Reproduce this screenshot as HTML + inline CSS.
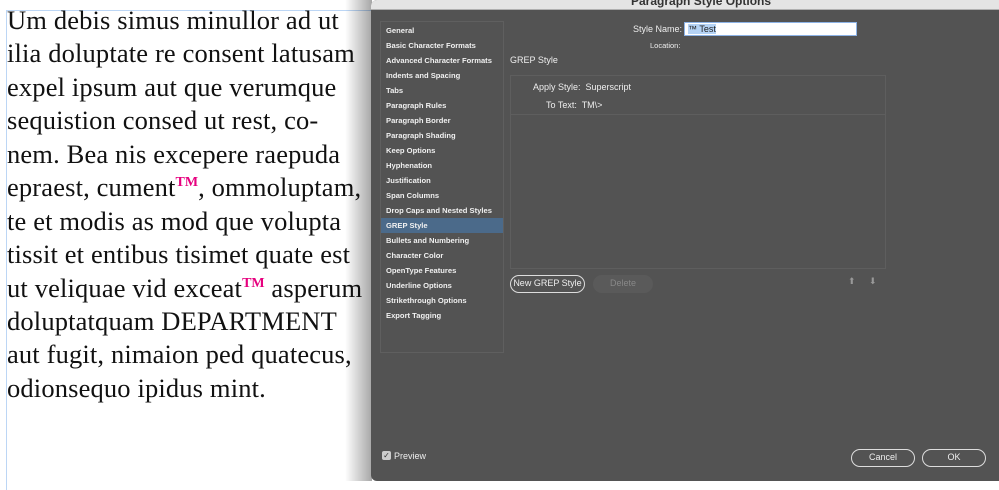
<!DOCTYPE html>
<html><head><meta charset="utf-8"><style>
*{margin:0;padding:0;box-sizing:border-box}
body{width:999px;height:481px;overflow:hidden;background:#fff;position:relative;font-family:"Liberation Sans",sans-serif}
.doc{position:absolute;left:6px;top:10px;width:380px;height:480px;border-left:1px solid #bcd6f5;border-top:1px solid #bcd6f5}
.txt{position:absolute;left:7px;top:0;font-family:"Liberation Serif",serif;font-size:26.5px;color:#111;white-space:nowrap;letter-spacing:0.15px}
.txt div{height:33.45px;line-height:33.45px;padding-top:4px;overflow:visible}
.tm{color:#e6007e;font-size:14px;font-weight:bold;position:relative;top:-10px;letter-spacing:0;line-height:0}
.shadow{position:absolute;left:345px;top:0;width:27px;height:481px;background:linear-gradient(90deg,rgba(0,0,0,0),rgba(0,0,0,.35))}
.dlg{position:absolute;left:371px;top:0;width:640px;height:481px;background:#535353;border-radius:6px 0 0 6px;overflow:hidden}
.title{height:10px;background:#e4e4e4;border-bottom:1px solid #b0b0b0;position:relative}
.title span{position:absolute;left:260px;top:-6px;font-size:12px;font-weight:bold;color:#333}
.list{position:absolute;left:9px;top:21px;width:124px;height:332px;border:1px solid #5f5f5f;background:#535353}
.list div{height:15px;line-height:15px;padding-left:5px;font-size:7.6px;color:#f0f0f0;font-weight:bold;margin-bottom:0}
.list .sel{background:#4b6a8a}
.lbl{position:absolute;font-size:9px;color:#eee}
.in{position:absolute;left:313px;top:22px;width:173px;height:14px;background:#fff;border:1px solid #8db3e6;font-size:9px;padding-left:3px;line-height:12px;color:#222}
.in span{background:#b5d3f5}
.grep{position:absolute;left:139px;top:75px;width:376px;height:194px;border:1px solid #5e5e5e}
.grep .row{position:absolute;left:0;top:0;width:100%;height:39px;border-bottom:1px solid #5e5e5e}
.btn{position:absolute;border:1.5px solid #ddd;border-radius:10px;font-size:9px;color:#eee;text-align:center}
</style></head><body>
<div class="doc"></div>
<div class="txt">
<div>Um debis simus minullor ad ut</div>
<div>ilia doluptate re consent latusam</div>
<div>expel ipsum aut que verumque</div>
<div>sequistion consed ut rest, co-</div>
<div>nem. Bea nis excepere raepuda</div>
<div>epraest, cument<span class="tm">TM</span>, ommoluptam,</div>
<div>te et modis as mod que volupta</div>
<div>tissit et entibus tisimet quate est</div>
<div>ut veliquae vid exceat<span class="tm">TM</span> asperum</div>
<div>doluptatquam DEPARTMENT</div>
<div>aut fugit, nimaion ped quatecus,</div>
<div>odionsequo ipidus mint.</div>
</div>
<div class="shadow"></div>
<div class="dlg">
<div class="title"><span>Paragraph Style Options</span></div>
<div class="list">
<div style="margin-top:1px">General</div><div>Basic Character Formats</div><div>Advanced Character Formats</div><div>Indents and Spacing</div><div>Tabs</div><div>Paragraph Rules</div><div>Paragraph Border</div><div>Paragraph Shading</div><div>Keep Options</div><div>Hyphenation</div><div>Justification</div><div>Span Columns</div><div>Drop Caps and Nested Styles</div><div class="sel">GREP Style</div><div>Bullets and Numbering</div><div>Character Color</div><div>OpenType Features</div><div>Underline Options</div><div>Strikethrough Options</div><div>Export Tagging</div>
</div>
<div class="lbl" style="left:262px;top:24px">Style Name:</div>
<div class="in"><span>™ Test</span></div>
<div class="lbl" style="left:279px;top:41px;font-size:7.5px">Location:</div>
<div class="lbl" style="left:139px;top:55px">GREP Style</div>
<div class="grep"><div class="row"></div>
<div class="lbl" style="left:22px;top:6px">Apply Style:&nbsp; Superscript</div>
<div class="lbl" style="left:35px;top:24px">To Text:&nbsp; TM\&gt;</div>
</div>
<div class="btn" style="left:139px;top:275px;width:75px;height:18px;line-height:15px">New GREP Style</div>
<div class="btn" style="left:222px;top:275px;width:60px;height:18px;line-height:16px;border:none;background:#5a5a5a;color:#888">Delete</div>
<div class="lbl" style="left:477px;top:276px;color:#999">⬆</div>
<div class="lbl" style="left:498px;top:276px;color:#999">⬇</div>
<div style="position:absolute;left:11px;top:451px;width:9px;height:9px;background:#ccc;border-radius:2px;font-size:8px;line-height:9px;text-align:center;color:#333">✓</div>
<div class="lbl" style="left:23px;top:451px">Preview</div>
<div class="btn" style="left:480px;top:449px;width:64px;height:18px;line-height:15px">Cancel</div>
<div class="btn" style="left:551px;top:449px;width:64px;height:18px;line-height:15px">OK</div>
</div>
</body></html>
